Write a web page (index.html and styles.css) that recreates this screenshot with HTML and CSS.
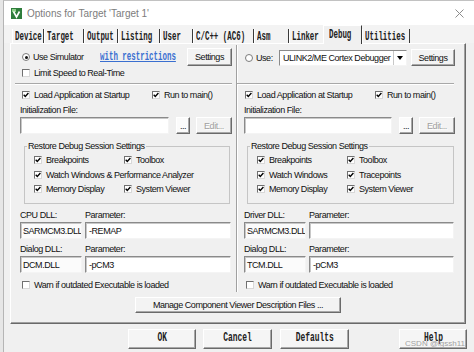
FILE: index.html
```html
<!DOCTYPE html>
<html>
<head>
<meta charset="utf-8">
<title>Options for Target 'Target 1'</title>
<link rel="stylesheet" href="styles.css">
</head>
<body>
<div class="win">
  <div class="titlebar">
    <svg class="appicon" viewBox="0 0 11 11"><rect width="11" height="11" fill="#2f7d3c"/><rect x="1" y="1" width="4" height="3" fill="#8fcf8a"/><path d="M2.5 3.5 5.5 9 8.5 3.5" fill="none" stroke="#fff" stroke-width="1.6"/></svg>
    <span class="title">Options for Target 'Target 1'</span>
    <svg class="close" viewBox="0 0 9 9"><path d="M.5 .5 8.5 8.5M8.5 .5 .5 8.5"/></svg>
  </div>

  <div class="tabs">
    <div class="tab t-device"><span class="tl">Device</span></div>
    <div class="tab t-target"><span class="tl">Target</span></div>
    <div class="tab t-output"><span class="tl">Output</span></div>
    <div class="tab t-listing"><span class="tl">Listing</span></div>
    <div class="tab t-user"><span class="tl">User</span></div>
    <div class="tab t-cc"><span class="tl">C/C++ (AC6)</span></div>
    <div class="tab t-asm"><span class="tl">Asm</span></div>
    <div class="tab t-linker nosep"><span class="tl">Linker</span></div>
    <div class="tab t-debug active"><span class="tl">Debug</span></div>
    <div class="tab t-util"><span class="tl">Utilities</span></div>
  </div>

  <div class="panel">
    <div class="cols">
      <div class="col left">
        <div class="row r1">
          <span class="radio on"></span><span class="sim">Use Simulator</span>
          <span class="link"><span class="ll">with restrictions</span></span>
          <button class="btn set">Settings</button>
        </div>
        <div class="row r2"><span class="cb"></span><span class="lbl">Limit Speed to Real-Time</span></div>
        <div class="sep"></div>
        <div class="row r3">
          <span class="cell1"><span class="cb"><svg viewBox="0 0 6 6"><path d="M.7 2.7 2.3 4.4 5.4 1.1"/></svg></span><span class="lbl">Load Application at Startup</span></span>
          <span class="cb"><svg viewBox="0 0 6 6"><path d="M.7 2.7 2.3 4.4 5.4 1.1"/></svg></span><span class="lbl">Run to main()</span>
        </div>
        <div class="row lab">Initialization File:</div>
        <div class="row inrow"><span class="edit fill"></span><button class="btn dots">...</button><button class="btn editb dis">Edit...</button></div>
        <fieldset class="group">
          <legend>Restore Debug Session Settings</legend>
          <div class="ginner">
            <div class="grow"><span class="gcell"><span class="cb"><svg viewBox="0 0 6 6"><path d="M.7 2.7 2.3 4.4 5.4 1.1"/></svg></span><span class="lbl">Breakpoints</span></span><span class="cb"><svg viewBox="0 0 6 6"><path d="M.7 2.7 2.3 4.4 5.4 1.1"/></svg></span><span class="lbl">Toolbox</span></div>
            <div class="grow"><span class="cb"><svg viewBox="0 0 6 6"><path d="M.7 2.7 2.3 4.4 5.4 1.1"/></svg></span><span class="lbl">Watch Windows &amp; Performance Analyzer</span></div>
            <div class="grow"><span class="gcell"><span class="cb"><svg viewBox="0 0 6 6"><path d="M.7 2.7 2.3 4.4 5.4 1.1"/></svg></span><span class="lbl">Memory Display</span></span><span class="cb"><svg viewBox="0 0 6 6"><path d="M.7 2.7 2.3 4.4 5.4 1.1"/></svg></span><span class="lbl">System Viewer</span></div>
          </div>
        </fieldset>
        <div class="row dlab"><span class="c1">CPU DLL:</span><span>Parameter:</span></div>
        <div class="row dinp"><span class="edit c1 ro">SARMCM3.DLL</span><span class="edit fill">-REMAP</span></div>
        <div class="row dlab2"><span class="c1">Dialog DLL:</span><span>Parameter:</span></div>
        <div class="row dinp"><span class="edit c1 ro">DCM.DLL</span><span class="edit fill">-pCM3</span></div>
        <div class="row warn"><span class="cb"></span><span class="lbl">Warn if outdated Executable is loaded</span></div>
      </div>

      <div class="vdiv"></div>

      <div class="col right">
        <div class="row r1">
          <span class="radio"></span><span class="use">Use:</span>
          <span class="select">ULINK2/ME Cortex Debugger<span class="arrow"></span></span>
          <button class="btn set">Settings</button>
        </div>
        <div class="row r2"></div>
        <div class="sep"></div>
        <div class="row r3">
          <span class="cell1"><span class="cb"><svg viewBox="0 0 6 6"><path d="M.7 2.7 2.3 4.4 5.4 1.1"/></svg></span><span class="lbl">Load Application at Startup</span></span>
          <span class="cb"><svg viewBox="0 0 6 6"><path d="M.7 2.7 2.3 4.4 5.4 1.1"/></svg></span><span class="lbl">Run to main()</span>
        </div>
        <div class="row lab">Initialization File:</div>
        <div class="row inrow"><span class="edit fill"></span><button class="btn dots">...</button><button class="btn editb dis">Edit...</button></div>
        <fieldset class="group">
          <legend>Restore Debug Session Settings</legend>
          <div class="ginner">
            <div class="grow"><span class="gcell"><span class="cb"><svg viewBox="0 0 6 6"><path d="M.7 2.7 2.3 4.4 5.4 1.1"/></svg></span><span class="lbl">Breakpoints</span></span><span class="cb"><svg viewBox="0 0 6 6"><path d="M.7 2.7 2.3 4.4 5.4 1.1"/></svg></span><span class="lbl">Toolbox</span></div>
            <div class="grow"><span class="gcell"><span class="cb"><svg viewBox="0 0 6 6"><path d="M.7 2.7 2.3 4.4 5.4 1.1"/></svg></span><span class="lbl">Watch Windows</span></span><span class="cb"><svg viewBox="0 0 6 6"><path d="M.7 2.7 2.3 4.4 5.4 1.1"/></svg></span><span class="lbl">Tracepoints</span></div>
            <div class="grow"><span class="gcell"><span class="cb"><svg viewBox="0 0 6 6"><path d="M.7 2.7 2.3 4.4 5.4 1.1"/></svg></span><span class="lbl">Memory Display</span></span><span class="cb"><svg viewBox="0 0 6 6"><path d="M.7 2.7 2.3 4.4 5.4 1.1"/></svg></span><span class="lbl">System Viewer</span></div>
          </div>
        </fieldset>
        <div class="row dlab"><span class="c1">Driver DLL:</span><span>Parameter:</span></div>
        <div class="row dinp"><span class="edit c1 ro">SARMCM3.DLL</span><span class="edit fill"></span></div>
        <div class="row dlab2"><span class="c1">Dialog DLL:</span><span>Parameter:</span></div>
        <div class="row dinp"><span class="edit c1 ro">TCM.DLL</span><span class="edit fill">-pCM3</span></div>
        <div class="row warn"><span class="cb"></span><span class="lbl">Warn if outdated Executable is loaded</span></div>
      </div>
    </div>
    <div class="manage-row"><button class="btn manage">Manage Component Viewer Description Files ...</button></div>
  </div>

  <div class="footer">
    <button class="btn fbtn ok"><span class="bl">OK</span></button>
    <button class="btn fbtn cancel"><span class="bl">Cancel</span></button>
    <button class="btn fbtn defaults"><span class="bl">Defaults</span></button>
    <button class="btn fbtn help"><span class="bl">Help</span></button>
  </div>
  <div class="wm">CSDN @lgssh11</div>
</div>
</body>
</html>
```

FILE: styles.css
```css
* { box-sizing: border-box; }
html, body { margin: 0; padding: 0; }
body {
  width: 474px; height: 352px; overflow: hidden;
  background: #e6e6e6;
  font-family: "Liberation Sans", Arial, sans-serif;
  font-size: 9px; letter-spacing: -0.45px; color: #101010;
}
.win {
  position: relative; margin-left: 3px; height: 352px;
  border-left: 1px solid #b5b5b5; border-top: 1px solid #c2c2c2;
  background: #f0f0f0;
}
.titlebar { height: 24px; background: #fff; display: flex; align-items: center; padding-left: 7px; }
.appicon { width: 11px; height: 11px; flex: none; }
.title { margin-left: 5px; font-size: 10px; letter-spacing: 0; color: #7c7c7c; white-space: nowrap; }
.close { width: 9px; height: 9px; margin-left: auto; margin-right: 10px; stroke: #8c8c8c; stroke-width: 1; fill: none; }

.tabs { height: 18px; display: flex; align-items: flex-end; padding-left: 8px; background: #f3f3f3; }
.tab {
  height: 14px; border-left: 1px solid #fff; border-right: 1px solid #3a3a3a;
  padding-left: 2px; position: relative; white-space: nowrap; flex: none;
}
.tl {
  display: inline-block; font-family: "Liberation Mono", monospace; font-weight: bold; letter-spacing: 0;
  font-size: 12px; line-height: 16px; transform: scaleX(.62); transform-origin: 0 50%; color: #202020;
}
.tab.nosep { border-right-color: transparent; }
.tab.active { height: 19px; margin-bottom: -1px; background: #f0f0f0; z-index: 1; padding: 2px 0 0 5px; border-top: 1px solid #fff; }
.tab.active .tl { line-height: 14px; }
.t-device { width: 32px; }
.t-target { width: 40px; }
.t-output { width: 34px; }
.t-listing { width: 42px; }
.t-user { width: 33px; }
.t-cc { width: 61px; }
.t-asm { width: 35px; }
.t-linker { width: 34px; }
.t-debug { width: 39px; }
.t-util { width: 48px; }

.panel {
  margin-left: 6px; width: 456px; height: 281px;
  border: 1px solid; border-color: #fff #696969 #696969 #fff;
  box-shadow: inset -1px -1px 0 #a0a0a0; background: #f0f0f0;
}
.cols { display: flex; padding-left: 9px; height: 248px; }
.col { display: flex; flex-direction: column; flex: none; }
.col.left { width: 212px; }
.col.right { width: 211px; }
.vdiv { width: 2px; margin: 1px 6px 0 4px; border-left: 1px solid #a0a0a0; border-right: 1px solid #fff; flex: none; }

.row { display: flex; align-items: center; white-space: nowrap; flex: none; }
.r1 { height: 18px; margin-top: 4px; padding-left: 2px; }
.right .r1 { height: 17px; margin-top: 5px; padding-left: 1px; }
.r2 { height: 14px; padding-left: 2px; }
.sep { height: 2px; margin: 3px 0 1px -5px; border-top: 1px solid #a8a8a8; border-bottom: 1px solid #fff; flex: none; }
.right .sep { margin-left: -7px; margin-right: 1px; }
.r3 { height: 14px; margin-top: 2px; padding-left: 2px; }
.right .r3 { padding-left: 1px; }
.cell1 { width: 130px; display: flex; align-items: center; flex: none; }
.lab { height: 14px; margin-top: 1px; }
.inrow { height: 17px; }

.sim { margin-left: 3px; width: 67px; flex: none; }
.link { width: 80px; flex: none; }
.ll {
  display: inline-block; font-family: "Liberation Mono", monospace; font-weight: bold; font-size: 12px; letter-spacing: 0;
  line-height: 14px; color: #3a6fd0; text-decoration: underline; transform: scaleX(.62); transform-origin: 0 50%;
}
.use { margin-left: 3px; width: 23px; flex: none; }
.select {
  width: 128px; height: 16px; background: #fff; border: 1px solid;
  border-color: #8a8a8a #f4f4f4 #f4f4f4 #8a8a8a; display: flex; align-items: center;
  padding-left: 3px; flex: none; overflow: hidden;
}
.arrow {
  margin-left: auto; width: 13px; height: 14px; border-left: 1px solid #c8c8c8; flex: none;
  display: flex; align-items: center; justify-content: center; background: #fff;
}
.arrow::after { content: ""; border-left: 3px solid transparent; border-right: 3px solid transparent; border-top: 4px solid #000; }

.lbl { margin-left: 4px; }
.cb {
  width: 8px; height: 8px; border: 1px solid; border-color: #707070 #d8d8d8 #d8d8d8 #707070;
  background: #fff; flex: none; display: inline-flex;
}
.cb svg { width: 6px; height: 6px; fill: none; stroke: #000; stroke-width: 1.4; }
.radio { width: 8px; height: 8px; border-radius: 50%; border: 1px solid #7c7c7c; background: #fff; flex: none; position: relative; }
.radio.on::after { content: ""; position: absolute; left: 1.5px; top: 1.5px; width: 3px; height: 3px; border-radius: 50%; background: #111; }

.group {
  margin: 6px 2px 0 4px; padding: 0; height: 64px; border: 1px solid #c5c5c5;
  min-width: 0; flex: none;
}
.right .group { margin: 6px 1px 0 3px; }
.group legend { padding: 0 1px; margin-left: 2px; line-height: 12px; }
.ginner { padding: 1px 0 0 9px; }
.grow { display: flex; align-items: center; height: 14.5px; white-space: nowrap; }
.gcell { width: 90px; display: flex; align-items: center; flex: none; }

.dlab { height: 14px; margin-top: 4px; }
.dlab2 { height: 14px; margin-top: 3px; }
.c1 { width: 65px; flex: none; }
.dinp { height: 17px; }
.dinp .c1 { width: 62px; margin-right: 3px; }
.warn { height: 14px; margin-top: 5px; padding-left: 2px; }

.edit {
  height: 100%; background: #fff; border: 1px solid;
  border-color: #8a8a8a #f4f4f4 #f4f4f4 #8a8a8a; box-shadow: inset 1px 1px 0 #c8c8c8;
  display: flex; align-items: center; padding-left: 2px; white-space: nowrap; overflow: hidden;
}
.edit.ro { background: #fbfbfb; padding-left: 2px; }
.edit.fill { flex: 1; margin-right: 1px; padding-left: 3px; }

.btn {
  font: inherit; letter-spacing: inherit; color: inherit; margin: 0; padding: 0; background: #f3f3f3;
  border: 1px solid; border-color: #fff #6a6a6a #6a6a6a #fff;
  box-shadow: inset -1px -1px 0 #a8a8a8;
  display: flex; align-items: center; justify-content: center; white-space: nowrap; flex: none;
}
.set { width: 45px; height: 18px; margin-left: auto; }
.right .set { width: 44px; height: 17px; }
.dots { width: 14px; height: 17px; margin-left: 6px; background: #fbfbfb; }
.editb { width: 36px; height: 17px; margin-left: 6px; }
.dis { color: #a0a0a0; text-shadow: 1px 1px 0 #fff; }

.manage-row { display: flex; justify-content: center; margin-top: 5px; }
.manage { width: 206px; height: 16px; }

.footer { display: flex; padding-left: 124px; margin-top: 5px; }
.fbtn { width: 68px; height: 20px; background: #f5f5f5; }
.ok { margin-right: 7px; }
.cancel, .defaults { width: 69px; margin-right: 8px; }
.help { margin-left: 42px; }
.bl {
  display: inline-block; font-family: "Liberation Mono", monospace; font-weight: bold; letter-spacing: 0;
  font-size: 12px; line-height: 14px; transform: scaleX(.66); color: #202020; margin-top: -2px;
}
.wm { position: absolute; right: 9px; bottom: 4px; font: 8px "Liberation Sans", sans-serif; letter-spacing: 0; color: #a2a2a2; white-space: nowrap; }
```
